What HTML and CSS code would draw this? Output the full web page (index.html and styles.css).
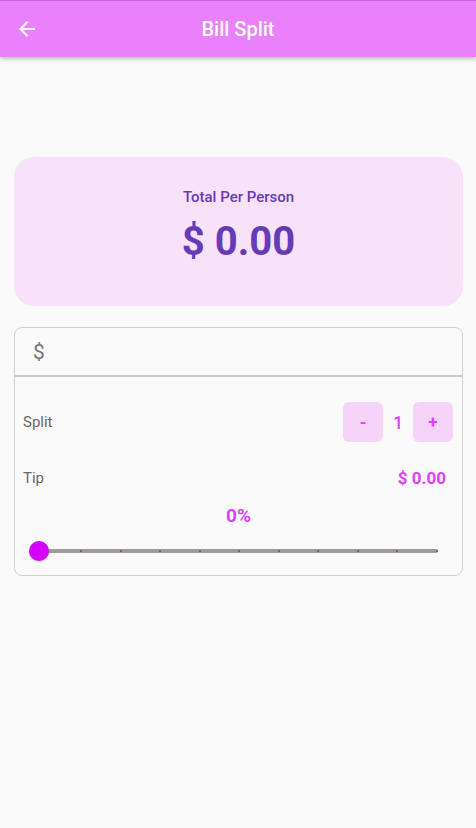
FILE: index.html
```html
<!DOCTYPE html>
<html>
<head>
  <title>Bill Split</title>
  <link rel="stylesheet" href="styles.css">
</head>
<body>
  <header class="appbar">
    <svg class="back" width="24" height="24" viewBox="0 0 24 24">
      <path d="M20 11H7.83l5.59-5.59L12 4l-8 8 8 8 1.41-1.41L7.83 13H20v-2z" fill="#fff"/>
    </svg>
    <h1>Bill Split</h1>
  </header>

  <main class="content">
    <div class="total-card">
      <div class="total-label">Total Per Person</div>
      <div class="total-value">$ 0.00</div>
    </div>

    <div class="bill-box">
      <div class="bill-input">
        <span class="currency">$</span>
      </div>

      <div class="row split-row">
        <span class="row-label">Split</span>
        <div class="counter">
          <button class="count-btn">-</button>
          <span class="count">1</span>
          <button class="count-btn">+</button>
        </div>
      </div>

      <div class="row tip-row">
        <span class="row-label">Tip</span>
        <span class="tip-amount">$ 0.00</span>
      </div>

      <div class="percent">0%</div>

      <div class="slider">
        <div class="track">
          <span class="tick"></span><span class="tick"></span><span class="tick"></span>
          <span class="tick"></span><span class="tick"></span><span class="tick"></span>
          <span class="tick"></span><span class="tick"></span><span class="tick"></span>
          <span class="tick"></span>
        </div>
        <span class="thumb"></span>
      </div>
    </div>
  </main>
</body>
</html>
```

FILE: styles.css
```css
body {
  margin: 0;
  font-family: Roboto, "Liberation Sans", sans-serif;
  background-color: #fafafa;
}

.appbar {
  height: 56px;
  border-top: 1px solid #c46ad6;
  background-color: #ea80fc;
  box-shadow: 0 2px 4px rgba(0, 0, 0, 0.25);
  display: flex;
  align-items: center;
  position: relative;
}

.back {
  margin-left: 15px;
}

.appbar h1 {
  flex: 1;
  margin: 0;
  padding-right: 39px;
  text-align: center;
  color: #fff;
  font-size: 20px;
  font-weight: 500;
}

.content {
  padding: 100px 13px 0 14px;
}

.total-card {
  height: 149px;
  background-color: #f8e2f9;
  border-radius: 20px;
  display: flex;
  flex-direction: column;
  align-items: center;
  padding-top: 31px;
  box-sizing: border-box;
}

.total-label {
  color: #673ab7;
  font-size: 15px;
  font-weight: 500;
}

.total-value {
  margin-top: 12px;
  color: #673ab7;
  font-size: 40px;
  font-weight: 700;
}

.bill-box {
  margin-top: 21px;
  height: 249px;
  border: 1px solid #cfcfcf;
  border-radius: 8px;
  box-sizing: border-box;
}

.bill-input {
  height: 47px;
  border-bottom: 2px solid #cccccc;
  display: flex;
  align-items: center;
  padding-left: 18px;
}

.currency {
  color: #757575;
  font-size: 21px;
}

.row {
  display: flex;
  align-items: center;
  justify-content: space-between;
  padding: 0 9px 0 8px;
}

.split-row {
  margin-top: 25px;
  height: 40px;
}

.row-label {
  color: #666666;
  font-size: 15px;
}

.counter {
  display: flex;
  align-items: center;
}

.count-btn {
  width: 40px;
  height: 40px;
  border: none;
  border-radius: 6px;
  background-color: #f6d4fa;
  color: #e040fb;
  font-family: Roboto, "Liberation Sans", sans-serif;
  font-size: 17px;
  font-weight: 700;
  padding: 0;
}

.count {
  width: 30px;
  text-align: center;
  color: #e040fb;
  font-size: 18px;
  font-weight: 500;
}

.tip-row {
  margin-top: 16px;
  height: 40px;
  padding-right: 16px;
}

.tip-amount {
  color: #e040fb;
  font-size: 17px;
  font-weight: 700;
}

.percent {
  margin-top: 6px;
  text-align: center;
  color: #e040fb;
  font-size: 19px;
  font-weight: 700;
}

.slider {
  position: relative;
  margin: 11px 24px 0 24px;
  height: 24px;
}

.track {
  position: absolute;
  left: 0;
  right: 0;
  top: 11px;
  height: 4px;
  background-color: #9e9a9e;
  border-radius: 2px;
  display: flex;
  justify-content: space-between;
  align-items: center;
  padding-left: 41px;
}

.tick {
  width: 2px;
  height: 2px;
  border-radius: 1px;
  background-color: #8e2fa0;
}

.thumb {
  position: absolute;
  left: -10px;
  top: 3px;
  width: 20px;
  height: 20px;
  border-radius: 50%;
  background-color: #d500f9;
  box-shadow: 0 1px 2px rgba(0, 0, 0, 0.2);
}
```
